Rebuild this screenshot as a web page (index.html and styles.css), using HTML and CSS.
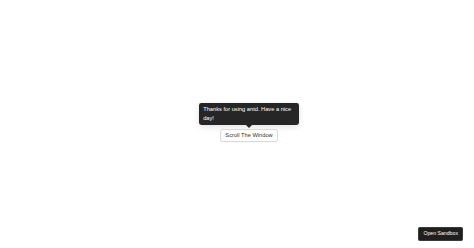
FILE: index.html
```html
<!DOCTYPE html>
<html>
<head>
<meta charset="utf-8">
<link rel="stylesheet" href="styles.css">
</head>
<body>
<div class="stage">
  <div class="tip">
    <div class="tip-inner">Thanks for using antd. Have a nice day!</div>
    <div class="tip-arrow"></div>
  </div>
  <button class="btn">Scroll The Window</button>
</div>
<button class="sandbox">Open Sandbox</button>
</body>
</html>
```
FILE: styles.css
```css
html, body {
  margin: 0;
  background: #ffffff;
  font-family: "Liberation Sans", Arial, sans-serif;
}
body {
  width: 474px;
  height: 248px;
  overflow: hidden;
  position: relative;
}
.stage {
  display: flex;
  flex-direction: column;
  align-items: center;
  padding-top: 103px;
  padding-left: 24px;
}
.tip {
  display: flex;
  flex-direction: column;
  align-items: center;
}
.tip-inner {
  box-sizing: border-box;
  width: 100px;
  padding: 2.4px 3.6px 2.4px 4.2px;
  background: rgba(0, 0, 0, 0.85);
  color: #ffffff;
  font-size: 5.7px;
  line-height: 8.8px;
  border-radius: 2.4px;
  box-shadow: 0 2px 6px rgba(0, 0, 0, 0.12);
}
.tip-arrow {
  width: 0;
  height: 0;
  border-left: 3.2px solid transparent;
  border-right: 3.2px solid transparent;
  border-top: 3.2px solid rgba(0, 0, 0, 0.85);
}
.btn {
  margin-top: 0.6px;
  box-sizing: border-box;
  height: 12.8px;
  padding: 0 4px;
  background: #ffffff;
  border: 0.5px solid #d9d9d9;
  border-radius: 2.4px;
  font-family: "Liberation Sans", Arial, sans-serif;
  font-size: 5.7px;
  color: rgba(0, 0, 0, 0.88);
  line-height: 1;
  box-shadow: 0 1px 0 rgba(0, 0, 0, 0.02);
}
.sandbox {
  position: absolute;
  right: 11px;
  bottom: 7px;
  box-sizing: border-box;
  height: 14px;
  padding: 0 4px;
  background: #1f1f1f;
  color: #ffffff;
  border: 0.5px solid #3a3a3a;
  border-radius: 1.5px;
  font-family: "Liberation Sans", Arial, sans-serif;
  font-size: 5.2px;
  line-height: 1;
}
```
